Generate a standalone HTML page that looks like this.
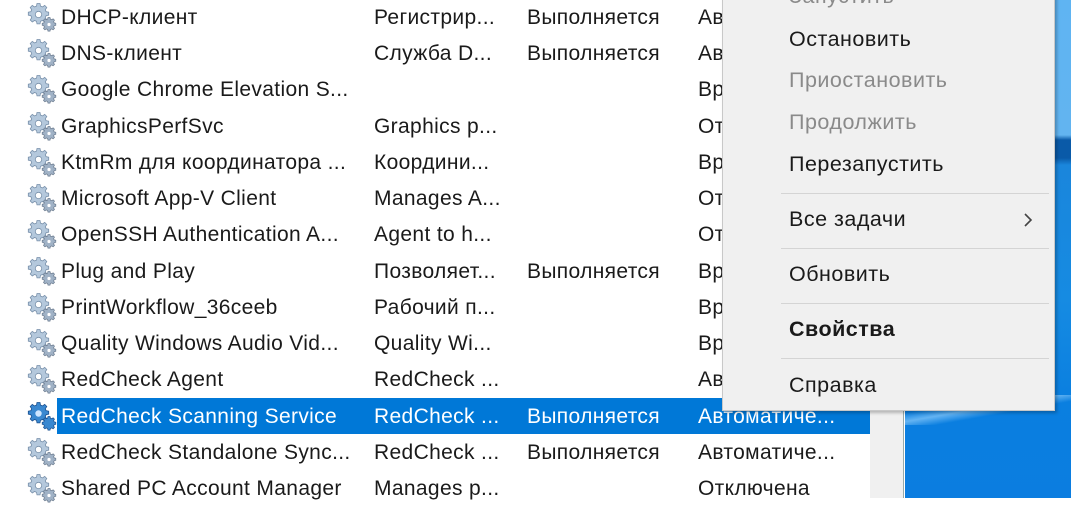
<!DOCTYPE html>
<html><head><meta charset="utf-8"><style>
*{margin:0;padding:0;box-sizing:border-box}
body{width:1071px;height:498px;overflow:hidden;position:relative;background:#fff;font-family:"Liberation Sans","DejaVu Sans",sans-serif;font-size:21px;letter-spacing:.35px;color:#1a1a1a}
.row{position:absolute;left:0;height:36px;width:870px}
.row span{position:absolute;top:7px;white-space:nowrap;overflow:hidden}
.n{left:61px;width:305px}.d{left:374px;width:145px}.s{left:527px;width:165px}.t{left:698px;width:170px}
.sel{position:absolute;left:57px;top:0;width:813px;height:36px;background:#0078d7}
.row.hl span{color:#fff}
.ic{position:absolute;left:26px;top:3px}
.gcol{position:absolute;left:870px;top:0;width:34px;height:498px;background:#f0f0f0;border-right:1px solid #9aa}
.desk{position:absolute;left:905px;top:0;width:166px;height:498px;background:linear-gradient(180deg,#5fb4f2 0,#62b4f0 135px,#0a5aa8 140px,#0a5aa8 158px,#1a86dc 165px,#168be2 300px,#0a7fe0 400px,#0b7de0 498px)}
.streak{position:absolute;left:905px;top:395px;width:166px;height:30px;background:linear-gradient(170deg,transparent 30%,rgba(160,215,255,.6) 45%,transparent 60%)}
.menu{position:absolute;left:722px;top:-20px;width:333px;height:431px;background:#f0f0f0;border:1px solid #c8c8c8;box-shadow:2px 2px 3px rgba(0,0,0,.25)}
.mi{position:absolute;left:66px;font-size:21.5px;letter-spacing:.5px;white-space:nowrap}
.dis{color:#8a8a8a}
.sep{position:absolute;left:58px;width:268px;height:1px;background:#d4d4d4}
</style></head><body>
<svg width="0" height="0" style="position:absolute"><defs>
<g id="gear">
<path d="M11 1.5h3l.5 2.6 2 .8 2.2-1.5 2.1 2.1-1.5 2.2.8 2 2.6.5v3l-2.6.5-.8 2 1.5 2.2-2.1 2.1-2.2-1.5-2 .8-.5 2.6h-3l-.5-2.6-2-.8-2.2 1.5-2.1-2.1 1.5-2.2-.8-2-2.6-.5v-3l2.6-.5.8-2-1.5-2.2 2.1-2.1 2.2 1.5 2-.8z" fill="#b4c8dc" stroke="#7890aa" stroke-width=".8"/>
<circle cx="12.5" cy="12.5" r="3.2" fill="#fff" stroke="#7890aa" stroke-width=".8"/>
<path d="M22 15.5h2l.4 1.6 1.3.6 1.4-.9 1.4 1.4-.9 1.4.6 1.3 1.6.4v2l-1.6.4-.6 1.3.9 1.4-1.4 1.4-1.4-.9-1.3.6-.4 1.6h-2l-.4-1.6-1.3-.6-1.4.9-1.4-1.4.9-1.4-.6-1.3-1.6-.4v-2l1.6-.4.6-1.3-.9-1.4 1.4-1.4 1.4.9 1.3-.6z" fill="#a0b2c6" stroke="#6c7c90" stroke-width=".7"/>
<circle cx="23" cy="22.5" r="1.6" fill="#fff"/>
</g>
<g id="gearb">
<path d="M11 1.5h3l.5 2.6 2 .8 2.2-1.5 2.1 2.1-1.5 2.2.8 2 2.6.5v3l-2.6.5-.8 2 1.5 2.2-2.1 2.1-2.2-1.5-2 .8-.5 2.6h-3l-.5-2.6-2-.8-2.2 1.5-2.1-2.1 1.5-2.2-.8-2-2.6-.5v-3l2.6-.5.8-2-1.5-2.2 2.1-2.1 2.2 1.5 2-.8z" fill="#3a88d0" stroke="#1a5090" stroke-width=".8"/>
<circle cx="12.5" cy="12.5" r="3.2" fill="#cfe6ff"/>
<path d="M22 15.5h2l.4 1.6 1.3.6 1.4-.9 1.4 1.4-.9 1.4.6 1.3 1.6.4v2l-1.6.4-.6 1.3.9 1.4-1.4 1.4-1.4-.9-1.3.6-.4 1.6h-2l-.4-1.6-1.3-.6-1.4.9-1.4-1.4.9-1.4-.6-1.3-1.6-.4v-2l1.6-.4.6-1.3-.9-1.4 1.4-1.4 1.4.9 1.3-.6z" fill="#3a88d0" stroke="#1a5090" stroke-width=".7"/>
</g>
</defs></svg>

<div class="row" style="top:-1px"><svg class="ic" width="32" height="32"><use href="#gear"/></svg><span class="n">DHCP-клиент</span><span class="d">Регистрир...</span><span class="s">Выполняется</span><span class="t">Автоматиче...</span></div>
<div class="row" style="top:35px"><svg class="ic" width="32" height="32"><use href="#gear"/></svg><span class="n">DNS-клиент</span><span class="d">Служба D...</span><span class="s">Выполняется</span><span class="t">Автоматиче...</span></div>
<div class="row" style="top:71px"><svg class="ic" width="32" height="32"><use href="#gear"/></svg><span class="n">Google Chrome Elevation S...</span><span class="t">Вручную</span></div>
<div class="row" style="top:108px"><svg class="ic" width="32" height="32"><use href="#gear"/></svg><span class="n">GraphicsPerfSvc</span><span class="d">Graphics p...</span><span class="t">Отключена</span></div>
<div class="row" style="top:144px"><svg class="ic" width="32" height="32"><use href="#gear"/></svg><span class="n">KtmRm для координатора ...</span><span class="d">Координи...</span><span class="t">Вручную</span></div>
<div class="row" style="top:180px"><svg class="ic" width="32" height="32"><use href="#gear"/></svg><span class="n">Microsoft App-V Client</span><span class="d">Manages A...</span><span class="t">Отключена</span></div>
<div class="row" style="top:216px"><svg class="ic" width="32" height="32"><use href="#gear"/></svg><span class="n">OpenSSH Authentication A...</span><span class="d">Agent to h...</span><span class="t">Отключена</span></div>
<div class="row" style="top:253px"><svg class="ic" width="32" height="32"><use href="#gear"/></svg><span class="n">Plug and Play</span><span class="d">Позволяет...</span><span class="s">Выполняется</span><span class="t">Вручную</span></div>
<div class="row" style="top:289px"><svg class="ic" width="32" height="32"><use href="#gear"/></svg><span class="n">PrintWorkflow_36ceeb</span><span class="d">Рабочий п...</span><span class="t">Вручную</span></div>
<div class="row" style="top:325px"><svg class="ic" width="32" height="32"><use href="#gear"/></svg><span class="n">Quality Windows Audio Vid...</span><span class="d">Quality Wi...</span><span class="t">Вручную</span></div>
<div class="row" style="top:361px"><svg class="ic" width="32" height="32"><use href="#gear"/></svg><span class="n">RedCheck Agent</span><span class="d">RedCheck ...</span><span class="t">Автоматиче...</span></div>
<div class="row hl" style="top:398px"><div class="sel"></div><svg class="ic" width="32" height="32"><use href="#gearb"/></svg><span class="n">RedCheck Scanning Service</span><span class="d">RedCheck ...</span><span class="s">Выполняется</span><span class="t">Автоматиче...</span></div>
<div class="row" style="top:434px"><svg class="ic" width="32" height="32"><use href="#gear"/></svg><span class="n">RedCheck Standalone Sync...</span><span class="d">RedCheck ...</span><span class="s">Выполняется</span><span class="t">Автоматиче...</span></div>
<div class="row" style="top:470px"><svg class="ic" width="32" height="32"><use href="#gear"/></svg><span class="n">Shared PC Account Manager</span><span class="d">Manages p...</span><span class="t">Отключена</span></div>

<div class="gcol"></div>
<div class="desk"></div>
<div class="streak"></div>

<div class="menu">
<div class="mi dis" style="top:3px">Запустить</div>
<div class="mi" style="top:46px">Остановить</div>
<div class="mi dis" style="top:87px">Приостановить</div>
<div class="mi dis" style="top:129px">Продолжить</div>
<div class="mi" style="top:171px">Перезапустить</div>
<div class="sep" style="top:212px"></div>
<div class="mi" style="top:226px">Все задачи</div>
<svg style="position:absolute;left:299px;top:231px" width="12" height="16"><path d="M3 2l6 6-6 6" fill="none" stroke="#444" stroke-width="1.6"/></svg>
<div class="sep" style="top:267px"></div>
<div class="mi" style="top:281px">Обновить</div>
<div class="sep" style="top:322px"></div>
<div class="mi" style="top:336px;font-weight:bold">Свойства</div>
<div class="sep" style="top:377px"></div>
<div class="mi" style="top:392px">Справка</div>
</div>
</body></html>
